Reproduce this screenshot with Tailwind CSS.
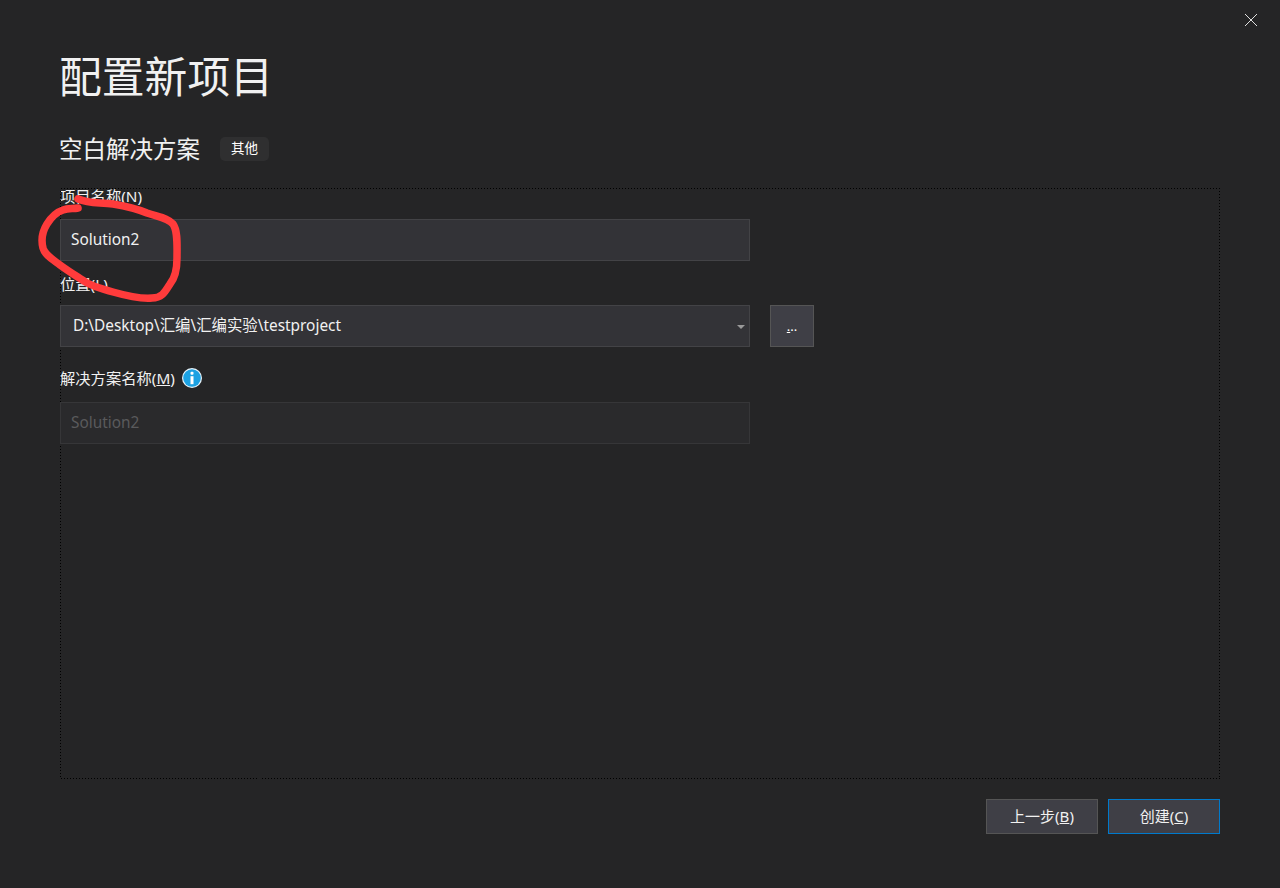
<!DOCTYPE html>
<html lang="zh">
<head>
<meta charset="utf-8">
<title>配置新项目</title>
<script src="https://cdn.jsdelivr.net/npm/@tailwindcss/browser@4"></script>
</head>
<body class="m-0 bg-[#252526]">
<div class="relative w-[1280px] h-[888px] overflow-hidden bg-[#252526] text-[#f1f1f1] font-['Noto_Sans','Noto_Sans_CJK_SC',sans-serif] flex flex-col pl-[60px] pr-[60px]">
  <button class="absolute top-[13px] left-[1244px] w-[14px] h-[14px] text-[#e0e0e0]" aria-label="关闭">
    <svg width="14" height="14" viewBox="0 0 14 14" fill="none" stroke="currentColor" stroke-width="1"><path d="M1 1 L13 13 M13 1 L1 13"/></svg>
  </button>

  <h1 class="h-[60px] mt-[47px] -ml-px text-[42.8px] leading-[60px] font-normal text-[#f1f1f1]">配置新项目</h1>

  <div class="mt-[22px] h-[40px] flex items-center gap-[20px]">
    <span class="-ml-px text-[23.5px] leading-[40px]">空白解决方案</span>
    <span class="h-[24px] w-[49px] rounded-[5px] bg-[#2f2f30] text-[13.5px] leading-[22px] text-center text-white">其他</span>
  </div>

  <div class="relative mt-[19px] h-[591px] flex flex-col">
    <svg class="absolute inset-0 pointer-events-none" width="1160" height="591" fill="none">
      <rect x="0.5" y="0.5" width="1159" height="590" stroke="#000000" stroke-width="1" stroke-dasharray="1 2" shape-rendering="crispEdges"/>
    </svg>
    <label class="h-[31px] pt-px text-[15.3px] leading-[15px]">项目名称(N)</label>
    <div class="relative w-[690px] h-[42px] bg-[#333337] border border-[#434346] pl-[10px] text-[15.4px] leading-[40px]">Solution2</div>

    <label class="mt-[14px] h-[30px] text-[15.3px] leading-[19px]">位置(L)</label>
    <div class="relative flex gap-[20px]">
      <div class="relative w-[690px] h-[42px] bg-[#333337] border border-[#434346] pl-[12px] text-[15.4px] leading-[40px]">
        D:\Desktop\汇编\汇编实验\testproject
        <span class="absolute right-[4px] top-[19px] w-0 h-0 border-x-[4px] border-x-transparent border-t-[4px] border-t-[#999999]"></span>
      </div>
      <button class="w-[44px] h-[42px] bg-[#3f3f46] border border-[#555555] text-[13px] leading-[38px] text-white text-center"><span class="underline">.</span>..</button>
    </div>

    <div class="mt-[20px] h-[35px] flex items-start gap-[7px]">
      <label class="text-[15.3px] leading-[22px]">解决方案名称(<span class="underline">M</span>)</label>
      <svg class="mt-[1px]" width="20" height="20" viewBox="0 0 20 20">
        <circle cx="10" cy="10" r="10" fill="#e8f4fb"/>
        <circle cx="10" cy="10" r="8.8" fill="#1ba1e2"/>
        <rect x="8.5" y="8.2" width="3" height="8" fill="#ffffff"/>
        <rect x="8.5" y="3.8" width="3" height="3" rx="1" fill="#ffffff"/>
      </svg>
    </div>
    <div class="relative w-[690px] h-[42px] bg-[#2a2a2c] border border-[#363638] pl-[10px] text-[15.4px] leading-[40px] text-[#5a5a5c]">Solution2</div>
  </div>

  <div class="mt-[20px] flex justify-end gap-[10px]">
    <button class="w-[112px] h-[35px] bg-[#3f3f46] border border-[#555555] text-[15px] leading-[31px] text-[#f1f1f1]">上一步(<span class="underline">B</span>)</button>
    <button class="w-[112px] h-[35px] bg-[#3f3f46] border border-[#007acc] text-[15px] leading-[31px] text-[#f1f1f1]">创建(<span class="underline">C</span>)</button>
  </div>

  <svg class="absolute inset-0 pointer-events-none" width="1280" height="888" viewBox="0 0 1280 888" fill="none">
    <path d="M78 199 C90 204 100 202 113 204 C125 206 135 208 147 213 C158 217 168 218 173 224 C178 231 177 245 177 258 C177 270 175 278 170 284 C165 292 162 298 152 298 C140 299 127 296 113 292 C100 288 97 288 87 283 C78 277 68 271 60 265 C52 259 45 255 43 248 C41 240 42 232 47 224 C52 216 57 212 63 210 C68 208 73 209 78 208" stroke="#ff3b3b" stroke-width="7.5" stroke-linecap="round" stroke-linejoin="round"/>
  </svg>
</div>
</body>
</html>
